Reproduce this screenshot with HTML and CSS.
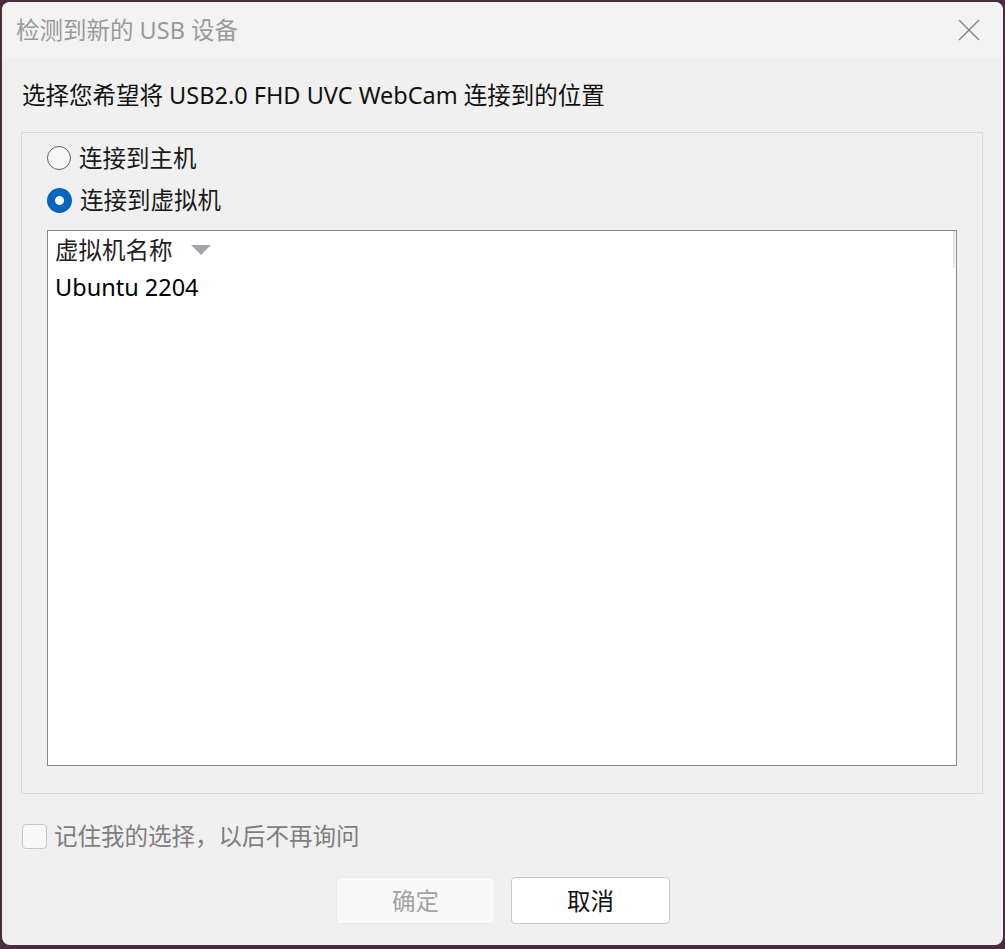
FILE: index.html
```html
<!DOCTYPE html>
<html lang="zh-CN">
  <head>
    <meta charset="UTF-8" />
    <title>检测到新的 USB 设备</title>
    <link rel="stylesheet" href="styles.css">
  </head>
  <body>
    <div class="window">
      <div class="titlebar">
        <span class="title">检测到新的 USB 设备</span>
        <span class="close">
          <svg width="22" height="22" viewBox="0 0 22 22"><path d="M1 1 L21 21 M21 1 L1 21" stroke="#8c8c8c" stroke-width="1.6" fill="none"/></svg>
        </span>
      </div>
      <div class="content">
        <p class="prompt">选择您希望将 USB2.0 FHD UVC WebCam 连接到的位置</p>
        <div class="group">
          <label class="radio">
            <span class="dot"></span>
            <span>连接到主机</span>
          </label>
          <label class="radio checked">
            <span class="dot"></span>
            <span>连接到虚拟机</span>
          </label>
          <div class="list">
            <div class="list-header">
              <span>虚拟机名称</span>
              <span class="sort"></span>
            </div>
            <div class="list-item">Ubuntu 2204</div>
          </div>
        </div>
        <label class="remember">
          <span class="box"></span>
          <span>记住我的选择，以后不再询问</span>
        </label>
        <div class="buttons">
          <button type="button" class="btn disabled">确定</button>
          <button type="button" class="btn">取消</button>
        </div>
      </div>
    </div>
  </body>
</html>
```

FILE: styles.css
```css
html, body {
  margin: 0;
  padding: 0;
  height: 100%;
}
body {
  background-color: #4a2c41;
  font-family: 'Noto Sans', 'Noto Sans CJK SC', sans-serif;
  color: #1a1a1a;
  padding: 2px 2px 0 2px;
  box-sizing: border-box;
}
.window {
  width: 1001px;
  height: 943px;
  background: #f0f0f0;
  border-radius: 8px;
  overflow: hidden;
  display: flex;
  flex-direction: column;
}
.titlebar {
  height: 56px;
  background: #f3f3f3;
  display: flex;
  align-items: center;
  justify-content: space-between;
  padding: 0 23px 0 14px;
  flex-shrink: 0;
}
.title {
  font-size: 23.5px;
  line-height: 28px;
  color: #9a9a9a;
}
.close {
  display: flex;
}
.content {
  padding: 0 20px 0 19px;
  display: flex;
  flex-direction: column;
}
.prompt {
  margin: 23px 0 0 1px;
  font-size: 23.5px;
  line-height: 28px;
  color: #111;
}
.group {
  margin-top: 23px;
  height: 662px;
  box-sizing: border-box;
  border: 1px solid #dadada;
  padding: 4px 25px 0 25px;
  display: flex;
  flex-direction: column;
  flex-shrink: 0;
}
.radio {
  height: 42px;
  display: flex;
  align-items: center;
  gap: 8px;
  font-size: 23.5px;
  line-height: 28px;
  color: #1a1a1a;
}
.dot {
  width: 22px;
  height: 22px;
  border: 1.5px solid #5f5f5f;
  border-radius: 50%;
  background: #f7f7f7;
  box-sizing: content-box;
  flex-shrink: 0;
}
.radio.checked .dot {
  width: 9px;
  height: 9px;
  border: 8px solid #0067c0;
  background: #fff;
}
.list {
  margin-top: 9px;
  height: 536px;
  box-sizing: border-box;
  border: 1px solid #868898;
  background: #fff;
}
.list-header {
  height: 37px;
  display: flex;
  align-items: center;
  padding-left: 7px;
  font-size: 23.5px;
  line-height: 28px;
  color: #222;
  border-right: 2px solid #e4e4e4;
  margin-right: 1px;
  box-sizing: border-box;
}
.sort {
  margin-left: 18px;
  width: 0;
  height: 0;
  border-left: 10px solid transparent;
  border-right: 10px solid transparent;
  border-top: 10px solid #a2a6ab;
}
.list-item {
  height: 38px;
  line-height: 38px;
  padding-left: 7px;
  font-size: 23.5px;
  color: #000;
}
.remember {
  margin: 28px 0 0 1px;
  height: 28px;
  display: flex;
  align-items: center;
  gap: 7px;
  font-size: 23.5px;
  line-height: 28px;
  color: #7e7e7e;
}
.box {
  width: 23px;
  height: 23px;
  border: 1px solid #c6c6c6;
  border-radius: 4px;
  background: #f8f8f8;
  flex-shrink: 0;
}
.buttons {
  margin-top: 27px;
  display: flex;
  justify-content: center;
  gap: 16px;
  padding-left: 2px;
}
.btn {
  width: 159px;
  height: 47px;
  background: #fff;
  border: 1px solid #c9c9c9;
  border-radius: 4px;
  font-family: 'Noto Sans', 'Noto Sans CJK SC', sans-serif;
  font-size: 23.5px;
  line-height: 28px;
  color: #111;
}
.btn.disabled {
  background: #f9f9f9;
  border-color: #e9e9e9;
  color: #a3a3a3;
}
```
